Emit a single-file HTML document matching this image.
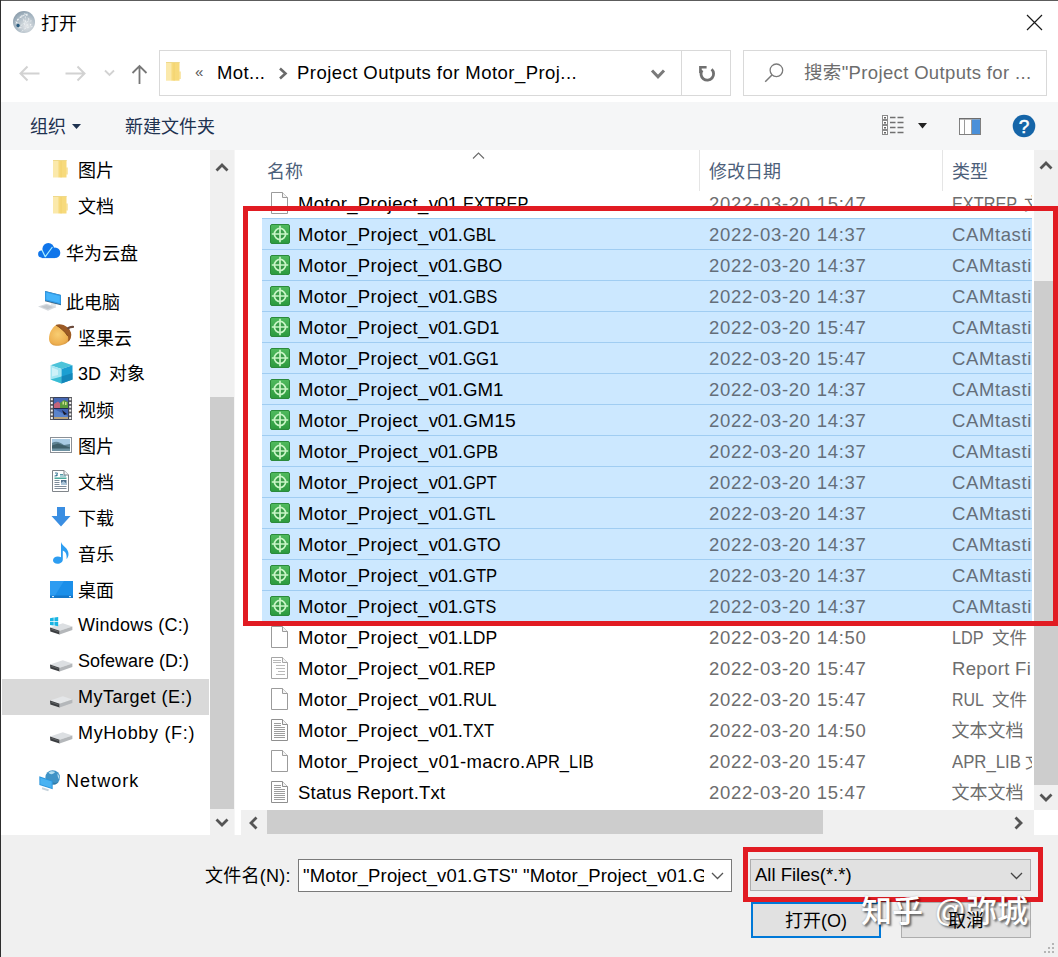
<!DOCTYPE html>
<html lang="zh-CN">
<head>
<meta charset="utf-8">
<title>打开</title>
<style>
*{box-sizing:border-box;margin:0;padding:0}
html,body{width:1058px;height:957px;overflow:hidden;background:#fff}
body{font-family:"Liberation Sans","Noto Sans CJK SC",sans-serif;font-size:18px;color:#000}
#win{position:relative;width:1058px;height:957px;overflow:hidden;background:#fff}
.abs{position:absolute}
#bt{left:0;top:0;width:1058px;height:1px;background:#5c5c5c;z-index:50}
#bl{left:0;top:0;width:1px;height:957px;background:#2e2e2e;z-index:50}
/* title */
#ticon{left:12.500px;top:10.700px;width:22.500px;height:22.500px;border-radius:50%;background:radial-gradient(circle at 62% 68%,#e4e7ea 0,#c3ccd3 30%,#9fb0bd 62%,#7f909e 88%,#76848f 100%);overflow:hidden}
#ttext{left:41px;top:11px;font-size:18px;line-height:26px;white-space:nowrap}
#close{left:1026px;top:14px}
/* address */
.box{border:1px solid #d9d9d9;background:#fff}
#addr{left:159px;top:50px;width:523px;height:46px}
#refresh{left:681px;top:50px;width:50px;height:46px}
#search{left:743px;top:50px;width:304px;height:46px}
.atx{top:60px;line-height:26px;font-size:18.5px;white-space:nowrap}
/* toolbar */
#tb{left:1px;top:102px;width:1057px;height:48px;background:#f5f6f7}
.tbt{top:114px;line-height:26px;font-size:18px;color:#1e3250;white-space:nowrap}
/* nav */
#nav{left:1px;top:150px;width:209px;height:685px;background:#fff;overflow:hidden}
.ni{position:absolute;left:1px;width:207px;height:36px;line-height:36px;white-space:nowrap;font-size:18px}
.ni span{position:absolute;top:0}
.ni.c span{top:2px}
.ni svg{position:absolute}
.ni.l1 span{left:64px}
.ni.l2 span{left:76px}
.ni.on{background:#d9d9d9}
#nsb{left:210px;top:150px;width:24px;height:685px;background:#f0f0f0}
#nsbt{left:210px;top:397px;width:24px;height:412px;background:#cdcdcd}
#gap{left:234px;top:150px;width:1px;height:685px;background:#f6f6f6}
/* list */
#list{left:238px;top:150px;width:796px;height:660px;background:#fff;overflow:hidden}
#hdr{position:absolute;left:0;top:0;width:796px;height:42px;background:#fff;z-index:5}
#hdr span{position:absolute;top:9px;line-height:26px;font-size:18px;color:#4c607a;white-space:nowrap}
#hdr i{position:absolute;top:0;width:1px;height:41px;background:#e5e5e5}
.row{position:absolute;left:24px;width:770px;overflow:hidden;height:31px;line-height:30px;white-space:nowrap;font-size:18.5px}
.row.sel{background:#cce8ff;border-top:1px solid #a0cdf2;border-bottom:0}
.row span{position:absolute;top:2px}
.row.sel span{top:1px}
.row .nm{left:36px;color:#000;letter-spacing:.08px}
.row .nm i{font-style:normal;letter-spacing:.38px}
.row .nm u{text-decoration:none;letter-spacing:-.27px}
.row .nm b{font-weight:normal;display:inline-block;transform-origin:0 50%;letter-spacing:0}
.row .dt{left:447px;color:#6d6d6d;letter-spacing:.72px}
.row .tp{left:690px;color:#6d6d6d;letter-spacing:.6px}
.row .tp.sq{letter-spacing:0;transform-origin:0 50%}
.row .tp.cj{letter-spacing:0;font-size:18px;left:689.5px}
.row .tp.cj2{letter-spacing:0;font-size:17.5px}
.row.sel .dt,.row.sel .tp{color:#646e79}
.row .fi{position:absolute}
.row .cam{left:8px;top:6px}
.row.sel .cam{top:5px}
.row .pg{left:9px;top:5px}
#vsb{left:1034px;top:150px;width:24px;height:660px;background:#f0f0f0}
#vsbt{left:1034px;top:281px;width:24px;height:504px;background:#cdcdcd}
#hsb{left:241px;top:810px;width:793px;height:25px;background:#f0f0f0}
#hsbt{left:267px;top:810px;width:556px;height:24px;background:#cdcdcd}
#corner{left:1034px;top:810px;width:24px;height:25px;background:#fff}
/* bottom */
#bot{left:1px;top:835px;width:1057px;height:122px;background:#f0f0f0}
#fnl{left:205px;top:863px;letter-spacing:.25px;line-height:26px;font-size:18px;white-space:nowrap}
#fn{left:298px;top:859px;width:434px;height:33px;border:1px solid #7a7a7a;background:#fff;overflow:hidden}
#fn span{position:absolute;left:4px;top:3px;line-height:26px;font-size:18.5px;letter-spacing:.14px;white-space:nowrap;width:401px;overflow:hidden;display:block}
#ft{left:750px;top:859px;width:281px;height:32px;border:1px solid #adadad;background:#e1e1e1}
#ft span{position:absolute;left:4px;top:2px;line-height:26px;font-size:18.5px;white-space:nowrap}
.btn{top:902px;height:36px;background:#e1e1e1;text-align:center;font-size:18px;line-height:31px;white-space:nowrap}
#ok{left:751px;width:130px;border:2px solid #0078d7;line-height:34px}
#cancel{left:901px;width:130px;border:1px solid #adadad}
#cancelt{left:901px;top:902px;width:130px;height:36px;line-height:38px;text-align:center;font-size:18px;z-index:40;white-space:nowrap}
.red{border:5px solid #e11b22;z-index:20}
#red1{left:243px;top:206px;width:815px;height:420px}
#red2{left:743px;top:847px;width:300px;height:55px}
#wm{left:861px;top:890px;font-size:31px;word-spacing:3px;font-weight:500;line-height:44px;color:#fff;white-space:nowrap;z-index:30;text-shadow:2px 2px 2px rgba(0,0,0,.5),0 0 2px rgba(0,0,0,.25);letter-spacing:0}
</style>
</head>
<body>
<div id="win">
<svg width="0" height="0" style="position:absolute"><defs>
<linearGradient id="gg" x1="0" y1="0" x2="0" y2="1"><stop offset="0" stop-color="#50ba5e"/><stop offset="1" stop-color="#2c9a3e"/></linearGradient>
<linearGradient id="fold" x1="0" y1="0" x2="1" y2="0"><stop offset="0" stop-color="#ffeeb4"/><stop offset="0.6" stop-color="#fbe08e"/><stop offset="1" stop-color="#efcf70"/></linearGradient>
</defs></svg>
<div id="bt" class="abs"></div><div id="bl" class="abs"></div>
<!-- title bar -->
<div id="ticon" class="abs"><svg width="22.500" height="22.500" viewBox="0 0 23 23"><path d="M3 13c2-5 6-9 12-10M4 9c3-3 7-5 12-5M6 18c2-4 6-7 13-8M9 21c2-3 6-5 11-5M7 6c3 1 6 4 8 9M12 2c1 4 1 9-1 14M2.500 11l4 1.500M15 7l3 2" stroke="#f2f6f8" stroke-width="1" fill="none" opacity=".7" stroke-dasharray="2.200 1.300"/><circle cx="5.200" cy="14.800" r="1.700" fill="#2a5d80"/><g fill="#fff" opacity=".85"><circle cx="5" cy="9" r=".7"/><circle cx="9" cy="5" r=".7"/><circle cx="14" cy="4" r=".6"/><circle cx="4" cy="12" r=".6"/><circle cx="18" cy="14" r=".7"/><circle cx="11" cy="10" r=".6"/><circle cx="8" cy="17" r=".6"/><circle cx="16" cy="9" r=".6"/></g></svg></div>
<div id="ttext" class="abs">打开</div>
<svg id="close" class="abs" width="17" height="17" viewBox="0 0 17 17"><path d="M1 1L16 16M16 1L1 16" stroke="#1a1a1a" stroke-width="1.2" fill="none"/></svg>
<!-- nav arrows -->
<svg class="abs" style="left:19px;top:65px" width="21" height="17" viewBox="0 0 21 17"><path d="M20.5 8.5H2M8.5 1.5L1.5 8.5L8.5 15.5" stroke="#d2d2d2" stroke-width="2" fill="none"/></svg>
<svg class="abs" style="left:65px;top:65px" width="21" height="17" viewBox="0 0 21 17"><path d="M0.5 8.5H19M12.5 1.5L19.5 8.5L12.5 15.5" stroke="#d2d2d2" stroke-width="2" fill="none"/></svg>
<svg class="abs" style="left:104px;top:69px" width="11" height="8" viewBox="0 0 11 8"><path d="M1 1.5L5.5 6L10 1.5" stroke="#d2d2d2" stroke-width="1.8" fill="none"/></svg>
<svg class="abs" style="left:131px;top:64px" width="17" height="20" viewBox="0 0 17 20"><path d="M8.5 20V2M1.5 9L8.5 2L15.5 9" stroke="#777" stroke-width="1.8" fill="none"/></svg>
<!-- address box -->
<div id="addr" class="abs box"></div>
<svg style="left:165.700px;top:61.800px" width="15" height="19" viewBox="0 0 15 19" class="abs"><rect x="0" y="0" width="5.200" height="18.7" fill="#fbe9ab"/><rect x="5.200" y="0" width="8.300" height="18.7" fill="#f7da7c"/><rect x="7.600" y="0" width="1" height="18.7" fill="#f2d068" opacity=".7"/><rect x="13.400" y="9.5" width="1.200" height="7.5" fill="#f5d778"/><rect x="0" y="0" width="13.500" height="1" fill="#efd98a"/></svg>
<div class="abs atx" style="left:195px;color:#555;font-size:15px;top:59px">«</div>
<div class="abs atx" style="left:217px;letter-spacing:.35px">Mot...</div>
<svg class="abs" style="left:278px;top:67px" width="10" height="13" viewBox="0 0 10 13"><path d="M2 1.5L7.5 6.5L2 11.5" stroke="#6a6a6a" stroke-width="2.6" fill="none"/></svg>
<div class="abs atx" style="left:297px;letter-spacing:.45px">Project Outputs for Motor_Proj...</div>
<svg class="abs" style="left:650px;top:68px" width="16" height="12" viewBox="0 0 16 12"><path d="M2 2.500L8 8.800L14 2.500" stroke="#7a7a7a" stroke-width="3" fill="none"/></svg>
<div id="refresh" class="abs box"></div>
<svg class="abs" style="left:697.5px;top:65px" width="19" height="19" viewBox="0 0 19 19"><path d="M13.600 4.300A6.300 6.300 0 1 1 4.200 5.200" stroke="#707070" stroke-width="2.800" fill="none"/><path d="M2.400 8.200V2.200H8.600" stroke="#707070" stroke-width="2.600" fill="none"/></svg>
<div id="search" class="abs box"></div>
<svg class="abs" style="left:764px;top:62px" width="22" height="22" viewBox="0 0 22 22"><circle cx="12.400" cy="8.300" r="6.300" stroke="#7a7a7a" stroke-width="1.300" fill="none"/><path d="M8 13L1.200 19.800" stroke="#7a7a7a" stroke-width="1.500" fill="none"/></svg>
<div class="abs atx" style="left:804px;color:#6d6d6d;letter-spacing:.35px">搜索"Project Outputs for ...</div>
<!-- toolbar -->
<div id="tb" class="abs"></div>
<div class="abs tbt" style="left:30px">组织</div>
<svg class="abs" style="left:72px;top:124px" width="9" height="5" viewBox="0 0 9 5"><path d="M0 0H9L4.5 5Z" fill="#1e3250"/></svg>
<div class="abs tbt" style="left:125px">新建文件夹</div>
<svg class="abs" style="left:882px;top:115px" width="22" height="21" viewBox="0 0 22 21"><g fill="#fff" stroke="#8a8a8a"><rect x="0.5" y="0.5" width="5" height="4"/><rect x="0.5" y="5.5" width="5" height="4"/><rect x="0.5" y="10.5" width="5" height="4"/><rect x="0.5" y="15.5" width="5" height="4"/></g><g fill="#666"><rect x="2" y="2" width="2" height="1.5"/><rect x="2" y="7" width="2" height="1.5"/><rect x="2" y="12" width="2" height="1.5"/><rect x="2" y="17" width="2" height="1.5"/></g><path d="M8 2.5h5.5M15.5 2.5h6M8 7.5h5.5M15.5 7.5h6M8 12.5h5.5M15.5 12.5h6M8 17.5h5.5M15.5 17.5h6" stroke="#707070" stroke-width="1.5"/></svg>
<svg class="abs" style="left:918px;top:123px" width="9" height="6" viewBox="0 0 9 6"><path d="M0 0H9L4.5 5.5Z" fill="#222"/></svg>
<svg class="abs" style="left:959px;top:118px" width="22" height="17" viewBox="0 0 22 17"><rect x=".5" y=".5" width="21" height="16" fill="#fff" stroke="#808080"/><rect x="0" y="0" width="22" height="1.500" fill="#6e6e6e"/><rect x="13" y="1.500" width="8" height="14.500" fill="#4a90d9"/><path d="M5.500 1.500V16M12.500 1.500V16" stroke="#9a9a9a"/></svg>
<svg class="abs" style="left:1012px;top:114px" width="24" height="24" viewBox="0 0 24 24"><circle cx="12" cy="12" r="11.3" fill="#1565a8"/><text x="12" y="18.800" text-anchor="middle" font-family="Liberation Sans, sans-serif" font-size="19" fill="#fff" stroke="#fff" stroke-width=".5">?</text></svg>
<!-- nav pane -->
<div id="nav" class="abs">
<div class="ni l2 c" style="top:1px"><svg style="left:51px;top:8.500px" width="15" height="18" viewBox="0 0 15 18" ><rect x="0" y="0" width="5.200" height="17.5" fill="#fbe9ab"/><rect x="5.200" y="0" width="8.300" height="17.5" fill="#f7da7c"/><rect x="7.600" y="0" width="1" height="17.5" fill="#f2d068" opacity=".7"/><rect x="13.400" y="7.5" width="1.200" height="7" fill="#f5d778"/><rect x="0" y="0" width="13.500" height="1" fill="#efd98a"/></svg><span>图片</span></div>
<div class="ni l2 c" style="top:37px"><svg style="left:51px;top:8.500px" width="15" height="18" viewBox="0 0 15 18" ><rect x="0" y="0" width="5.200" height="17.5" fill="#fbe9ab"/><rect x="5.200" y="0" width="8.300" height="17.5" fill="#f7da7c"/><rect x="7.600" y="0" width="1" height="17.5" fill="#f2d068" opacity=".7"/><rect x="13.400" y="7.5" width="1.200" height="7" fill="#f5d778"/><rect x="0" y="0" width="13.500" height="1" fill="#efd98a"/></svg><span>文档</span></div>
<div class="ni l1 c" style="top:85px"><svg style="left:36px;top:8px" width="23" height="16" viewBox="0 0 23 16"><g fill="#0f75ea"><circle cx="3.600" cy="11" r="3.500"/><circle cx="10.300" cy="6" r="5.900"/><circle cx="17" cy="9.800" r="5.300"/><rect x="3.600" y="9" width="13.400" height="6.100"/></g><path d="M4 7L7.200 13.800L14.400 4" stroke="#a8f0ff" stroke-width="1.200" fill="none" stroke-linejoin="round"/></svg><span style="top:1px">华为云盘</span></div>
<div class="ni l1 c" style="top:133px"><svg style="left:35px;top:7px" width="25" height="22" viewBox="0 0 25 22"><path d="M14.500 12L13.500 16.500L18.500 17.800L19.500 13.500Z" fill="#e3e7ea"/><path d="M1 16.500L9.500 13.800L19.500 17L11 20.800Z" fill="#d6dade"/><path d="M4 16.800L9.500 15L16 17L10.800 19.200Z" fill="#c2c7cc"/><path d="M8 1L24 5V15.300L8 11.300Z" fill="#3a5f7a"/><path d="M8 1L24 5V14.500L8 10.500Z" fill="#2f97e2"/><path d="M9.200 2.600L22.800 6V13L9.200 9.600Z" fill="#45b4fb"/></svg><span>此电脑</span></div>
<div class="ni l2 c" style="top:169px"><svg style="left:47px;top:5px" width="25" height="23" viewBox="0 0 25 23"><defs><radialGradient id="ac" cx="0.4" cy="0.45" r="0.65"><stop offset="0" stop-color="#f8cd72"/><stop offset="0.7" stop-color="#eeb050"/><stop offset="1" stop-color="#c98a3a"/></radialGradient></defs><path d="M7 1C3 4 0 9 0 14.500C0 19 3 21.500 7 21.800C12 22 17 20 19.500 17.500C22 15 22.500 11 22 8.500Z" fill="url(#ac)"/><path d="M7 1C10 -0.500 15 .5 19 3.700C22 6.500 23 11 21.500 14.500C21 16 20 17 19 17.500C19.500 15 19.300 13 18.700 12C16 7.500 11 3.500 7 1Z" fill="#9c5a25"/><path d="M7 1C11 3.500 16 7.500 18.700 12" stroke="#7a4415" stroke-width=".8" fill="none"/><path d="M19.300 4.200Q21 2.600 24 2.800" stroke="#6b4a3c" stroke-width="2.300" fill="none" stroke-linecap="round"/></svg><span>坚果云</span></div>
<div class="ni l2" style="top:205px"><svg style="left:48px;top:6px" width="23" height="23" viewBox="0 0 23 23"><path d="M11.500 .5L22.500 4.200L11.500 8L.5 4.200Z" fill="#4cc3d9"/><path d="M.5 4.200L11.500 8V22.500L.5 18.500Z" fill="#a4e6f3"/><path d="M.5 18.500L11.500 15.500V22.500Z" fill="#38bcd4"/><path d="M2 6.500L8 9V14L2 15.500Z" fill="#dff7fb" opacity=".7"/><path d="M22.500 4.200L11.500 8V22.500L22.500 18.500Z" fill="#1b9fd2"/><path d="M22.500 12L11.500 15.500V22.500L22.500 18.500Z" fill="#1487ba"/></svg><span style="top:1px;word-spacing:3px">3D 对象</span></div>
<div class="ni l2 c" style="top:241px"><svg style="left:48px;top:6px" width="22" height="23" viewBox="0 0 22 23"><rect width="22" height="23" fill="#5b5b60"/><rect x="3.500" y=".5" width="15" height="22" fill="#1d2a52"/><rect x="4" y="1" width="14" height="10" fill="#4668b4"/><path d="M4 7L8 4.500L11 7.500V11H4Z" fill="#c4647a"/><path d="M10 6L14 3L18 5V11H10Z" fill="#5a9a3c"/><path d="M12.500 4.500h1.500v3h-1.500zM15 5h1.500v3H15z" fill="#cfe08a"/><rect x="4" y="12" width="14" height="10" fill="#3f62b0"/><path d="M4 12L18 19V22H4Z" fill="#5b84cc"/><path d="M12 13L17 17L14 18Z" fill="#1a1a2a"/><path d="M4 20H18V22H4Z" fill="#b9a27a"/><g fill="#f2f2f2"><rect x=".8" y="1.200" width="2" height="2"/><rect x=".8" y="5" width="2" height="2"/><rect x=".8" y="8.800" width="2" height="2"/><rect x=".8" y="12.600" width="2" height="2"/><rect x=".8" y="16.400" width="2" height="2"/><rect x=".8" y="20" width="2" height="2"/><rect x="19.200" y="1.200" width="2" height="2"/><rect x="19.200" y="5" width="2" height="2"/><rect x="19.200" y="8.800" width="2" height="2"/><rect x="19.200" y="12.600" width="2" height="2"/><rect x="19.200" y="16.400" width="2" height="2"/><rect x="19.200" y="20" width="2" height="2"/></g></svg><span>视频</span></div>
<div class="ni l2 c" style="top:277px"><svg style="left:48px;top:10px" width="22" height="16" viewBox="0 0 22 16"><rect x=".5" y=".5" width="21" height="15" fill="#fff" stroke="#8b9096"/><rect x="2" y="2" width="18" height="12" fill="#a9cbe4"/><path d="M2 6C6 3.500 10 5 14 8L20 7V14H2Z" fill="#5f8394"/><path d="M2 8.500L8 6.500L20 10.500V14H2Z" fill="#3f5f6a"/><path d="M2 11.500H20V14H2Z" fill="#6f93a3"/></svg><span>图片</span></div>
<div class="ni l2 c" style="top:313px"><svg style="left:50px;top:7px" width="17" height="22" viewBox="0 0 17 22"><path d="M.5 .5H12L16.500 5V21.500H.5Z" fill="#fff" stroke="#80858a"/><path d="M12 .5V5H16.500" fill="#f1f3f5" stroke="#80858a"/><path d="M3 3L5.500 3L4 6.500M2.500 6L6 5" stroke="#2f6f8f" stroke-width=".9" fill="none"/><path d="M8 4.500h3M8 6h6" stroke="#3f8f9f" stroke-width=".9"/><path d="M2.500 8.200H14.500" stroke="#2b9a8c" stroke-width="1.300"/><path d="M2.500 10.500h5M2.500 12.500h5M2.500 14.500h5M2.500 16.500h12M2.500 18.500h12" stroke="#6f7f8f" stroke-width=".9"/><rect x="9" y="10" width="5.500" height="5" fill="#4f6f8c"/><path d="M9 13L11.500 11L14.500 13.500V15H9Z" fill="#a9c4d8"/></svg><span>文档</span></div>
<div class="ni l2 c" style="top:349px"><svg style="left:49px;top:8px" width="20" height="20" viewBox="0 0 20 20"><path d="M6 0H14V9H19.5L10 19.5L.5 9H6Z" fill="#3a8ee2"/></svg><span>下载</span></div>
<div class="ni l2 c" style="top:385px"><svg style="left:50px;top:7px" width="18" height="22" viewBox="0 0 18 22"><path d="M9 0C10 4 16.5 6 16.5 12C16.5 14.5 15.5 16 14.5 17C15 14 14.5 10 10.8 8.5V17.5C10.800 20 8.500 21.800 5.500 21.800C3 21.800 1 20.300 1 18.300C1 16 3.200 14.500 5.800 14.500C7 14.500 8 14.800 9 15.300Z" fill="#2d9df1"/></svg><span>音乐</span></div>
<div class="ni l2 c" style="top:421px"><svg style="left:48px;top:10px" width="23" height="17" viewBox="0 0 23 17"><rect width="23" height="17" fill="#1b8fe9"/><rect x="0" y="14.5" width="23" height="2.5" fill="#1477c9"/><path d="M0 0H14L5 14.5H0Z" fill="#34a1f3" opacity=".7"/><rect x="2" y="15" width="2" height="1.2" fill="#cfe8fb"/><rect x="19" y="15" width="2" height="1.2" fill="#cfe8fb"/></svg><span>桌面</span></div>
<div class="ni l2" style="top:457px"><svg style="left:48px;top:10px" width="23" height="18" viewBox="0 0 23 18"><g transform="translate(0,6)"><path d="M0 4.600L12.800 .3L22.400 3.500L9.600 7.800Z" fill="#dcdfe2"/><path d="M0 4.600L9.600 7.800V11.400L.3 8.400Z" fill="#3b3d40"/><path d="M9.600 7.800L22.400 3.500V7.100L9.600 11.400Z" fill="#b4b7ba"/><path d="M1.200 6.200L8.600 8.700" stroke="#6a6d70" stroke-width=".8"/></g><g fill="#19b4e2"><path d="M0 1.200L3.700 .6V4.200H0Z"/><path d="M4.400 .5L8.200 0V4.200H4.400Z"/><path d="M0 4.900H3.700V8.500L0 7.900Z"/><path d="M4.400 4.900H8.200V9.200L4.400 8.600Z"/></g></svg><span style="letter-spacing:.27px">Windows (C:)</span></div>
<div class="ni l2" style="top:493px"><svg style="left:48px;top:17px" width="23" height="12" viewBox="0 0 23 12"><path d="M0 4.600L12.800 .3L22.400 3.500L9.600 7.800Z" fill="#dcdfe2"/><path d="M0 4.600L9.600 7.800V11.400L.3 8.400Z" fill="#3b3d40"/><path d="M9.600 7.800L22.400 3.500V7.100L9.600 11.400Z" fill="#b4b7ba"/><path d="M1.200 6.200L8.600 8.700" stroke="#6a6d70" stroke-width=".8"/></svg><span>Sofeware (D:)</span></div>
<div class="ni l2 on" style="top:529px"><svg style="left:48px;top:17px" width="23" height="12" viewBox="0 0 23 12"><path d="M0 4.600L12.800 .3L22.400 3.500L9.600 7.800Z" fill="#e4e6e8"/><path d="M0 4.600L9.600 7.800V11.400L.3 8.400Z" fill="#3b3d40"/><path d="M9.600 7.800L22.400 3.500V7.100L9.600 11.400Z" fill="#b4b7ba"/><path d="M1.200 6.200L8.600 8.700" stroke="#6a6d70" stroke-width=".8"/></svg><span style="letter-spacing:.5px">MyTarget (E:)</span></div>
<div class="ni l2" style="top:565px"><svg style="left:48px;top:17px" width="23" height="12" viewBox="0 0 23 12"><path d="M0 4.600L12.800 .3L22.400 3.500L9.600 7.800Z" fill="#dcdfe2"/><path d="M0 4.600L9.600 7.800V11.400L.3 8.400Z" fill="#3b3d40"/><path d="M9.600 7.800L22.400 3.500V7.100L9.600 11.400Z" fill="#b4b7ba"/><path d="M1.200 6.200L8.600 8.700" stroke="#6a6d70" stroke-width=".8"/></svg><span style="letter-spacing:.67px">MyHobby (F:)</span></div>
<div class="ni l1" style="top:613px"><svg style="left:36px;top:6px" width="23" height="23" viewBox="0 0 23 23"><circle cx="14.700" cy="8.500" r="7.300" fill="#3f93c6"/><path d="M10.500 3.500C12.500 1.800 15.500 1.800 17 3C15.500 5.500 12 6 10.500 3.500Z" fill="#c9ecf8" opacity=".85"/><path d="M19.500 4.500C21 6 21.800 8.500 21.300 10.500C20 9 19.300 6.500 19.500 4.500Z" fill="#d8f1fa" opacity=".8"/><path d="M15 13.500C17 14.500 19.500 13.800 20.800 12.300C20 14.500 18 15.800 15.500 15.800Z" fill="#2a6f98" opacity=".7"/><path d="M1.300 7.300L14.700 11.800V20.300L1.400 16Z" fill="#2b96dd"/><path d="M2.300 8.800L13.700 12.600V19L2.300 15.300Z" fill="#49b3f2"/><path d="M4.300 18.200L11 20.400L10.200 22.300L3.800 20.200Z" fill="#c5d3dc"/></svg><span style="letter-spacing:1.05px">Network</span></div>
</div>
<div id="nsb" class="abs"></div><div id="nsbt" class="abs"></div>
<svg class="abs" style="left:215px;top:163px" width="14" height="9" viewBox="0 0 14 9"><path d="M1.500 7.500L7 2L12.500 7.500" stroke="#555" stroke-width="2.800" fill="none"/></svg>
<svg class="abs" style="left:215px;top:818px" width="14" height="9" viewBox="0 0 14 9"><path d="M1.500 1.500L7 7L12.500 1.500" stroke="#555" stroke-width="2.800" fill="none"/></svg>
<div id="gap" class="abs"></div>
<!-- file list -->
<div id="list" class="abs">
<div id="hdr"><span style="left:29px">名称</span><svg style="position:absolute;left:234px;top:2px" width="13" height="7" viewBox="0 0 13 7"><path d="M1 6.500L6.500 1L12 6.500" stroke="#6b6b6b" stroke-width="1.100" fill="none"/></svg><i style="left:461px"></i><span style="left:471px">修改日期</span><i style="left:704px"></i><span style="left:714px">类型</span></div>
<div class="row" style="top:37px"><svg class="fi pg" width="17" height="22" viewBox="0 0 17 22"><path d="M0.5 0.5H11.5L16.5 5.5V21.5H0.5Z" fill="#fff" stroke="#9b9b9b"/><path d="M11.5 0.5V5.5H16.5" fill="#f4f4f4" stroke="#9b9b9b"/></svg><span class="nm"><i>Motor_Project_</i><u>v01.</u><b style="transform:scaleX(0.883)">EXTREP</b></span><span class="dt">2022-03-20 15:47</span><span class="tp sq" style="transform:scaleX(0.88)">EXTREP</span><span class="tp cj2" style="left:762px">文件</span></div>
<div class="row sel" style="top:68px"><svg class="fi cam" width="20" height="20" viewBox="0 0 20 20"><rect x="0.5" y="0.5" width="19" height="19" rx="1.5" fill="url(#gg)" stroke="#2b8a3b"/><circle cx="10" cy="10" r="5.6" fill="#1d5a2a" fill-opacity=".22" stroke="#c9f5c6" stroke-width="1.7"/><path d="M10 1.8v16.400M1.800 10h16.400" stroke="#c9f5c6" stroke-width="1.700"/></svg><span class="nm"><i>Motor_Project_</i><u>v01.</u><b style="transform:scaleX(0.885)">GBL</b></span><span class="dt">2022-03-20 14:37</span><span class="tp">CAMtastic</span></div>
<div class="row sel" style="top:99px"><svg class="fi cam" width="20" height="20" viewBox="0 0 20 20"><rect x="0.5" y="0.5" width="19" height="19" rx="1.5" fill="url(#gg)" stroke="#2b8a3b"/><circle cx="10" cy="10" r="5.6" fill="#1d5a2a" fill-opacity=".22" stroke="#c9f5c6" stroke-width="1.7"/><path d="M10 1.8v16.400M1.800 10h16.400" stroke="#c9f5c6" stroke-width="1.700"/></svg><span class="nm"><i>Motor_Project_</i><u>v01.</u><b style="transform:scaleX(0.955)">GBO</b></span><span class="dt">2022-03-20 14:37</span><span class="tp">CAMtastic</span></div>
<div class="row sel" style="top:130px"><svg class="fi cam" width="20" height="20" viewBox="0 0 20 20"><rect x="0.5" y="0.5" width="19" height="19" rx="1.5" fill="url(#gg)" stroke="#2b8a3b"/><circle cx="10" cy="10" r="5.6" fill="#1d5a2a" fill-opacity=".22" stroke="#c9f5c6" stroke-width="1.7"/><path d="M10 1.8v16.400M1.800 10h16.400" stroke="#c9f5c6" stroke-width="1.700"/></svg><span class="nm"><i>Motor_Project_</i><u>v01.</u><b style="transform:scaleX(0.875)">GBS</b></span><span class="dt">2022-03-20 14:37</span><span class="tp">CAMtastic</span></div>
<div class="row sel" style="top:161px"><svg class="fi cam" width="20" height="20" viewBox="0 0 20 20"><rect x="0.5" y="0.5" width="19" height="19" rx="1.5" fill="url(#gg)" stroke="#2b8a3b"/><circle cx="10" cy="10" r="5.6" fill="#1d5a2a" fill-opacity=".22" stroke="#c9f5c6" stroke-width="1.7"/><path d="M10 1.8v16.400M1.800 10h16.400" stroke="#c9f5c6" stroke-width="1.700"/></svg><span class="nm"><i>Motor_Project_</i><u>v01.</u><b style="transform:scaleX(0.954)">GD1</b></span><span class="dt">2022-03-20 15:47</span><span class="tp">CAMtastic</span></div>
<div class="row sel" style="top:192px"><svg class="fi cam" width="20" height="20" viewBox="0 0 20 20"><rect x="0.5" y="0.5" width="19" height="19" rx="1.5" fill="url(#gg)" stroke="#2b8a3b"/><circle cx="10" cy="10" r="5.6" fill="#1d5a2a" fill-opacity=".22" stroke="#c9f5c6" stroke-width="1.7"/><path d="M10 1.8v16.400M1.800 10h16.400" stroke="#c9f5c6" stroke-width="1.700"/></svg><span class="nm"><i>Motor_Project_</i><u>v01.</u><b style="transform:scaleX(0.909)">GG1</b></span><span class="dt">2022-03-20 15:47</span><span class="tp">CAMtastic</span></div>
<div class="row sel" style="top:223px"><svg class="fi cam" width="20" height="20" viewBox="0 0 20 20"><rect x="0.5" y="0.5" width="19" height="19" rx="1.5" fill="url(#gg)" stroke="#2b8a3b"/><circle cx="10" cy="10" r="5.6" fill="#1d5a2a" fill-opacity=".22" stroke="#c9f5c6" stroke-width="1.7"/><path d="M10 1.8v16.400M1.800 10h16.400" stroke="#c9f5c6" stroke-width="1.700"/></svg><span class="nm"><i>Motor_Project_</i><u>v01.</u><b style="transform:scaleX(1.008)">GM1</b></span><span class="dt">2022-03-20 14:37</span><span class="tp">CAMtastic</span></div>
<div class="row sel" style="top:254px"><svg class="fi cam" width="20" height="20" viewBox="0 0 20 20"><rect x="0.5" y="0.5" width="19" height="19" rx="1.5" fill="url(#gg)" stroke="#2b8a3b"/><circle cx="10" cy="10" r="5.6" fill="#1d5a2a" fill-opacity=".22" stroke="#c9f5c6" stroke-width="1.7"/><path d="M10 1.8v16.400M1.800 10h16.400" stroke="#c9f5c6" stroke-width="1.700"/></svg><span class="nm"><i>Motor_Project_</i><u>v01.</u><b style="transform:scaleX(1.048)">GM15</b></span><span class="dt">2022-03-20 14:37</span><span class="tp">CAMtastic</span></div>
<div class="row sel" style="top:285px"><svg class="fi cam" width="20" height="20" viewBox="0 0 20 20"><rect x="0.5" y="0.5" width="19" height="19" rx="1.5" fill="url(#gg)" stroke="#2b8a3b"/><circle cx="10" cy="10" r="5.6" fill="#1d5a2a" fill-opacity=".22" stroke="#c9f5c6" stroke-width="1.7"/><path d="M10 1.8v16.400M1.800 10h16.400" stroke="#c9f5c6" stroke-width="1.700"/></svg><span class="nm"><i>Motor_Project_</i><u>v01.</u><b style="transform:scaleX(0.896)">GPB</b></span><span class="dt">2022-03-20 14:37</span><span class="tp">CAMtastic</span></div>
<div class="row sel" style="top:316px"><svg class="fi cam" width="20" height="20" viewBox="0 0 20 20"><rect x="0.5" y="0.5" width="19" height="19" rx="1.5" fill="url(#gg)" stroke="#2b8a3b"/><circle cx="10" cy="10" r="5.6" fill="#1d5a2a" fill-opacity=".22" stroke="#c9f5c6" stroke-width="1.7"/><path d="M10 1.8v16.400M1.800 10h16.400" stroke="#c9f5c6" stroke-width="1.700"/></svg><span class="nm"><i>Motor_Project_</i><u>v01.</u><b style="transform:scaleX(0.888)">GPT</b></span><span class="dt">2022-03-20 14:37</span><span class="tp">CAMtastic</span></div>
<div class="row sel" style="top:347px"><svg class="fi cam" width="20" height="20" viewBox="0 0 20 20"><rect x="0.5" y="0.5" width="19" height="19" rx="1.5" fill="url(#gg)" stroke="#2b8a3b"/><circle cx="10" cy="10" r="5.6" fill="#1d5a2a" fill-opacity=".22" stroke="#c9f5c6" stroke-width="1.7"/><path d="M10 1.8v16.400M1.800 10h16.400" stroke="#c9f5c6" stroke-width="1.700"/></svg><span class="nm"><i>Motor_Project_</i><u>v01.</u><b style="transform:scaleX(0.901)">GTL</b></span><span class="dt">2022-03-20 14:37</span><span class="tp">CAMtastic</span></div>
<div class="row sel" style="top:378px"><svg class="fi cam" width="20" height="20" viewBox="0 0 20 20"><rect x="0.5" y="0.5" width="19" height="19" rx="1.5" fill="url(#gg)" stroke="#2b8a3b"/><circle cx="10" cy="10" r="5.6" fill="#1d5a2a" fill-opacity=".22" stroke="#c9f5c6" stroke-width="1.7"/><path d="M10 1.8v16.400M1.800 10h16.400" stroke="#c9f5c6" stroke-width="1.700"/></svg><span class="nm"><i>Motor_Project_</i><u>v01.</u><b style="transform:scaleX(0.949)">GTO</b></span><span class="dt">2022-03-20 14:37</span><span class="tp">CAMtastic</span></div>
<div class="row sel" style="top:409px"><svg class="fi cam" width="20" height="20" viewBox="0 0 20 20"><rect x="0.5" y="0.5" width="19" height="19" rx="1.5" fill="url(#gg)" stroke="#2b8a3b"/><circle cx="10" cy="10" r="5.6" fill="#1d5a2a" fill-opacity=".22" stroke="#c9f5c6" stroke-width="1.7"/><path d="M10 1.8v16.400M1.800 10h16.400" stroke="#c9f5c6" stroke-width="1.700"/></svg><span class="nm"><i>Motor_Project_</i><u>v01.</u><b style="transform:scaleX(0.898)">GTP</b></span><span class="dt">2022-03-20 14:37</span><span class="tp">CAMtastic</span></div>
<div class="row sel" style="top:440px"><svg class="fi cam" width="20" height="20" viewBox="0 0 20 20"><rect x="0.5" y="0.5" width="19" height="19" rx="1.5" fill="url(#gg)" stroke="#2b8a3b"/><circle cx="10" cy="10" r="5.6" fill="#1d5a2a" fill-opacity=".22" stroke="#c9f5c6" stroke-width="1.7"/><path d="M10 1.8v16.400M1.800 10h16.400" stroke="#c9f5c6" stroke-width="1.700"/></svg><span class="nm"><i>Motor_Project_</i><u>v01.</u><b style="transform:scaleX(0.874)">GTS</b></span><span class="dt">2022-03-20 14:37</span><span class="tp">CAMtastic</span></div>
<div class="row" style="top:471px"><svg class="fi pg" width="17" height="22" viewBox="0 0 17 22"><path d="M0.5 0.5H11.5L16.5 5.5V21.5H0.5Z" fill="#fff" stroke="#9b9b9b"/><path d="M11.5 0.5V5.5H16.5" fill="#f4f4f4" stroke="#9b9b9b"/></svg><span class="nm"><i>Motor_Project_</i><u>v01.</u><b style="transform:scaleX(0.949)">LDP</b></span><span class="dt">2022-03-20 14:50</span><span class="tp sq" style="transform:scaleX(0.88)">LDP</span><span class="tp cj2" style="left:730px">文件</span></div>
<div class="row" style="top:502px"><svg class="fi pg" width="17" height="22" viewBox="0 0 17 22"><path d="M0.5 0.5H11.5L16.5 5.5V21.5H0.5Z" fill="#fff" stroke="#a5a5a5"/><path d="M11.5 0.5V5.5H16.5" fill="#f4f4f4" stroke="#a5a5a5"/><path d="M2 3.5h8M2 5.5h8M5 8.5h9M5 11.5h9M7 14.5h7M5 17.5h9" stroke="#b9b9b9"/></svg><span class="nm"><i>Motor_Project_</i><u>v01.</u><b style="transform:scaleX(0.853)">REP</b></span><span class="dt">2022-03-20 15:47</span><span class="tp" style="letter-spacing:.35px">Report File</span></div>
<div class="row" style="top:533px"><svg class="fi pg" width="17" height="22" viewBox="0 0 17 22"><path d="M0.5 0.5H11.5L16.5 5.5V21.5H0.5Z" fill="#fff" stroke="#9b9b9b"/><path d="M11.5 0.5V5.5H16.5" fill="#f4f4f4" stroke="#9b9b9b"/></svg><span class="nm"><i>Motor_Project_</i><u>v01.</u><b style="transform:scaleX(0.904)">RUL</b></span><span class="dt">2022-03-20 15:47</span><span class="tp sq" style="transform:scaleX(0.86)">RUL</span><span class="tp cj2" style="left:730px">文件</span></div>
<div class="row" style="top:564px"><svg class="fi pg" width="17" height="22" viewBox="0 0 17 22"><path d="M0.5 0.5H11.5L16.5 5.5V21.5H0.5Z" fill="#fff" stroke="#8f8f8f"/><path d="M11.5 0.5V5.5H16.5" fill="#f4f4f4" stroke="#8f8f8f"/><path d="M3 4.5h7M3 6.5h7M3 8.5h11M3 10.5h11M3 12.5h11M3 14.5h11M3 16.5h11M3 18.5h11" stroke="#9d9d9d"/></svg><span class="nm"><i>Motor_Project_</i><u>v01.</u><b style="transform:scaleX(0.89)">TXT</b></span><span class="dt">2022-03-20 14:50</span><span class="tp cj">文本文档</span></div>
<div class="row" style="top:595px"><svg class="fi pg" width="17" height="22" viewBox="0 0 17 22"><path d="M0.5 0.5H11.5L16.5 5.5V21.5H0.5Z" fill="#fff" stroke="#9b9b9b"/><path d="M11.5 0.5V5.5H16.5" fill="#f4f4f4" stroke="#9b9b9b"/></svg><span class="nm"><i>Motor_Project_</i><u style="letter-spacing:.44px">v01-macro.</u><b style="transform:scaleX(0.89)">APR_LIB</b></span><span class="dt">2022-03-20 15:47</span><span class="tp sq" style="transform:scaleX(0.906)">APR_LIB</span><span class="tp cj2" style="left:763px">文件</span></div>
<div class="row" style="top:626px"><svg class="fi pg" width="17" height="22" viewBox="0 0 17 22"><path d="M0.5 0.5H11.5L16.5 5.5V21.5H0.5Z" fill="#fff" stroke="#8f8f8f"/><path d="M11.5 0.5V5.5H16.5" fill="#f4f4f4" stroke="#8f8f8f"/><path d="M3 4.5h7M3 6.5h7M3 8.5h11M3 10.5h11M3 12.5h11M3 14.5h11M3 16.5h11M3 18.5h11" stroke="#9d9d9d"/></svg><span class="nm" style="letter-spacing:0.2px">Status Report.Txt</span><span class="dt">2022-03-20 15:47</span><span class="tp cj">文本文档</span></div></div>
<div id="vsb" class="abs"></div><div id="vsbt" class="abs"></div>
<svg class="abs" style="left:1039px;top:161px" width="14" height="9" viewBox="0 0 14 9"><path d="M1.500 7.500L7 2L12.500 7.500" stroke="#555" stroke-width="2.800" fill="none"/></svg>
<svg class="abs" style="left:1039px;top:793px" width="14" height="9" viewBox="0 0 14 9"><path d="M1.500 1.500L7 7L12.500 1.500" stroke="#555" stroke-width="2.800" fill="none"/></svg>
<div id="hsb" class="abs"></div><div id="hsbt" class="abs"></div>
<svg class="abs" style="left:249px;top:816px" width="9" height="14" viewBox="0 0 9 14"><path d="M7.500 1.500L2 7L7.500 12.500" stroke="#555" stroke-width="2.800" fill="none"/></svg>
<svg class="abs" style="left:1014px;top:816px" width="9" height="14" viewBox="0 0 9 14"><path d="M1.500 1.500L7 7L1.500 12.500" stroke="#555" stroke-width="2.800" fill="none"/></svg>
<div id="corner" class="abs"></div>
<!-- bottom panel -->
<div id="bot" class="abs"></div>
<div id="fnl" class="abs">文件名(N):</div>
<div id="fn" class="abs"><span>"Motor_Project_v01.GTS" "Motor_Project_v01.GTP" "Motor_Project_v01.GTO"</span><svg style="position:absolute;right:7px;top:12px" width="13" height="8" viewBox="0 0 13 8"><path d="M1 1L6.500 6.500L12 1" stroke="#555" stroke-width="1.300" fill="none"/></svg></div>
<div id="ft" class="abs"><span>All Files(*.*)</span><svg style="position:absolute;right:7px;top:12px" width="13" height="8" viewBox="0 0 13 8"><path d="M1 1L6.500 6.500L12 1" stroke="#444" stroke-width="1.300" fill="none"/></svg></div>
<div id="ok" class="abs btn">打开(O)</div>
<div id="cancel" class="abs btn"></div><div id="cancelt" class="abs">取消</div>
<svg class="abs" style="left:1044px;top:943px" width="12" height="12" viewBox="0 0 12 12"><g fill="#b5b5b5"><rect x="8" y="0" width="2" height="2"/><rect x="4" y="4" width="2" height="2"/><rect x="8" y="4" width="2" height="2"/><rect x="0" y="8" width="2" height="2"/><rect x="4" y="8" width="2" height="2"/><rect x="8" y="8" width="2" height="2"/></g></svg>
<!-- annotations -->
<div id="red1" class="abs red"></div>
<div id="red2" class="abs red"></div>
<div id="wm" class="abs">知乎 @弥城</div>
</div>
</body>
</html>
